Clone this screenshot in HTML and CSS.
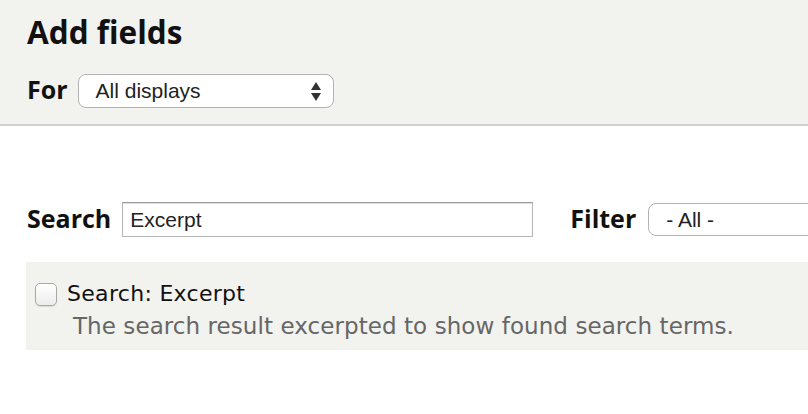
FILE: index.html
```html
<!DOCTYPE html>
<html>
<head>
<meta charset="utf-8">
<link rel="stylesheet" href="styles.css">
</head>
<body>
<div class="header">
  <h1 class="title">Add fields</h1>
  <div class="for-row">
    <span class="label">For</span>
    <div class="select select-for">
      <span class="select-text">All displays</span>
      <svg class="arrows" width="10" height="19" viewBox="0 0 10 19"><path d="M5 0 L10 8 L0 8 Z M0 11 L10 11 L5 19 Z" fill="#333"/></svg>
    </div>
  </div>
</div>
<div class="content">
  <div class="search-row">
    <span class="label">Search</span>
    <div class="input">Excerpt</div>
    <span class="label filter-label">Filter</span>
    <div class="select select-filter">
      <span class="select-text">- All -</span>
    </div>
  </div>
  <div class="panel">
    <div class="item-row">
      <span class="checkbox"></span>
      <span class="item-label">Search: Excerpt</span>
    </div>
    <div class="item-desc">The search result excerpted to show found search terms.</div>
  </div>
</div>
</body>
</html>
```
FILE: styles.css
```css
html, body {
  margin: 0;
  padding: 0;
  background: #fff;
  overflow: hidden;
}
body {
  width: 808px;
  height: 414px;
  color: #000;
  font-family: "DejaVu Sans", sans-serif;
}
.header {
  box-sizing: border-box;
  height: 126px;
  background: #f2f2ee;
  border-bottom: 2px solid #cfcfcf;
  padding: 14px 27px 0;
}
.title {
  margin: 0;
  font-family: "Open Sans", sans-serif;
  font-weight: 700;
  font-size: 31.5px;
  line-height: 36px;
  color: #111;
}
.for-row {
  display: flex;
  align-items: center;
  gap: 10px;
  margin-top: 24px;
  height: 34px;
}
.label {
  font-family: "Open Sans", sans-serif;
  font-weight: 700;
  font-size: 25px;
  line-height: 30px;
  padding-bottom: 4px;
  color: #111;
}
.select {
  box-sizing: border-box;
  display: flex;
  align-items: center;
  justify-content: space-between;
  background: #fff;
  border: 1px solid #b3b3b3;
  border-radius: 8px;
  font-family: "Liberation Sans", sans-serif;
  font-size: 21px;
  color: #222;
}
.select-for {
  width: 256px;
  height: 34px;
  padding: 0 12px 0 17px;
}
.arrows {
  display: block;
}
.content {
  width: 900px;
  padding: 0 0 0 26px;
}
.search-row {
  display: flex;
  align-items: center;
  margin-top: 76px;
  height: 35px;
}
.search-row .label {
  margin-left: 1px;
  margin-right: 11px;
}
.input {
  box-sizing: border-box;
  width: 411px;
  height: 35px;
  border: 1px solid #b5b5b5;
  border-top-color: #9a9a9a;
  box-shadow: inset 0 1px 1px #ddd;
  padding-left: 7px;
  display: flex;
  align-items: center;
  font-family: "Liberation Sans", sans-serif;
  font-size: 21px;
  color: #222;
  background: #fff;
}
.search-row .filter-label {
  margin-left: 37px;
  margin-right: 12px;
}
.select-filter {
  width: 220px;
  height: 33px;
  padding: 0 0 0 17px;
}
.panel {
  margin-top: 25px;
  background: #f2f2ee;
  padding: 17px 0 9px 9px;
}
.item-row {
  display: flex;
  align-items: center;
  gap: 10px;
  height: 30px;
}
.checkbox {
  box-sizing: border-box;
  width: 22px;
  height: 23px;
  border: 1px solid #a8a8a8;
  border-radius: 5px;
  background: linear-gradient(#fff, #ececec);
  box-shadow: 0 1px 1px rgba(0,0,0,0.1);
}
.item-label {
  font-size: 22px;
  letter-spacing: 0.3px;
  line-height: 30px;
  color: #111;
}
.item-desc {
  margin: 2px 0 0 38px;
  font-size: 23px;
  letter-spacing: 0.07px;
  line-height: 30px;
  color: #666;
}
```
